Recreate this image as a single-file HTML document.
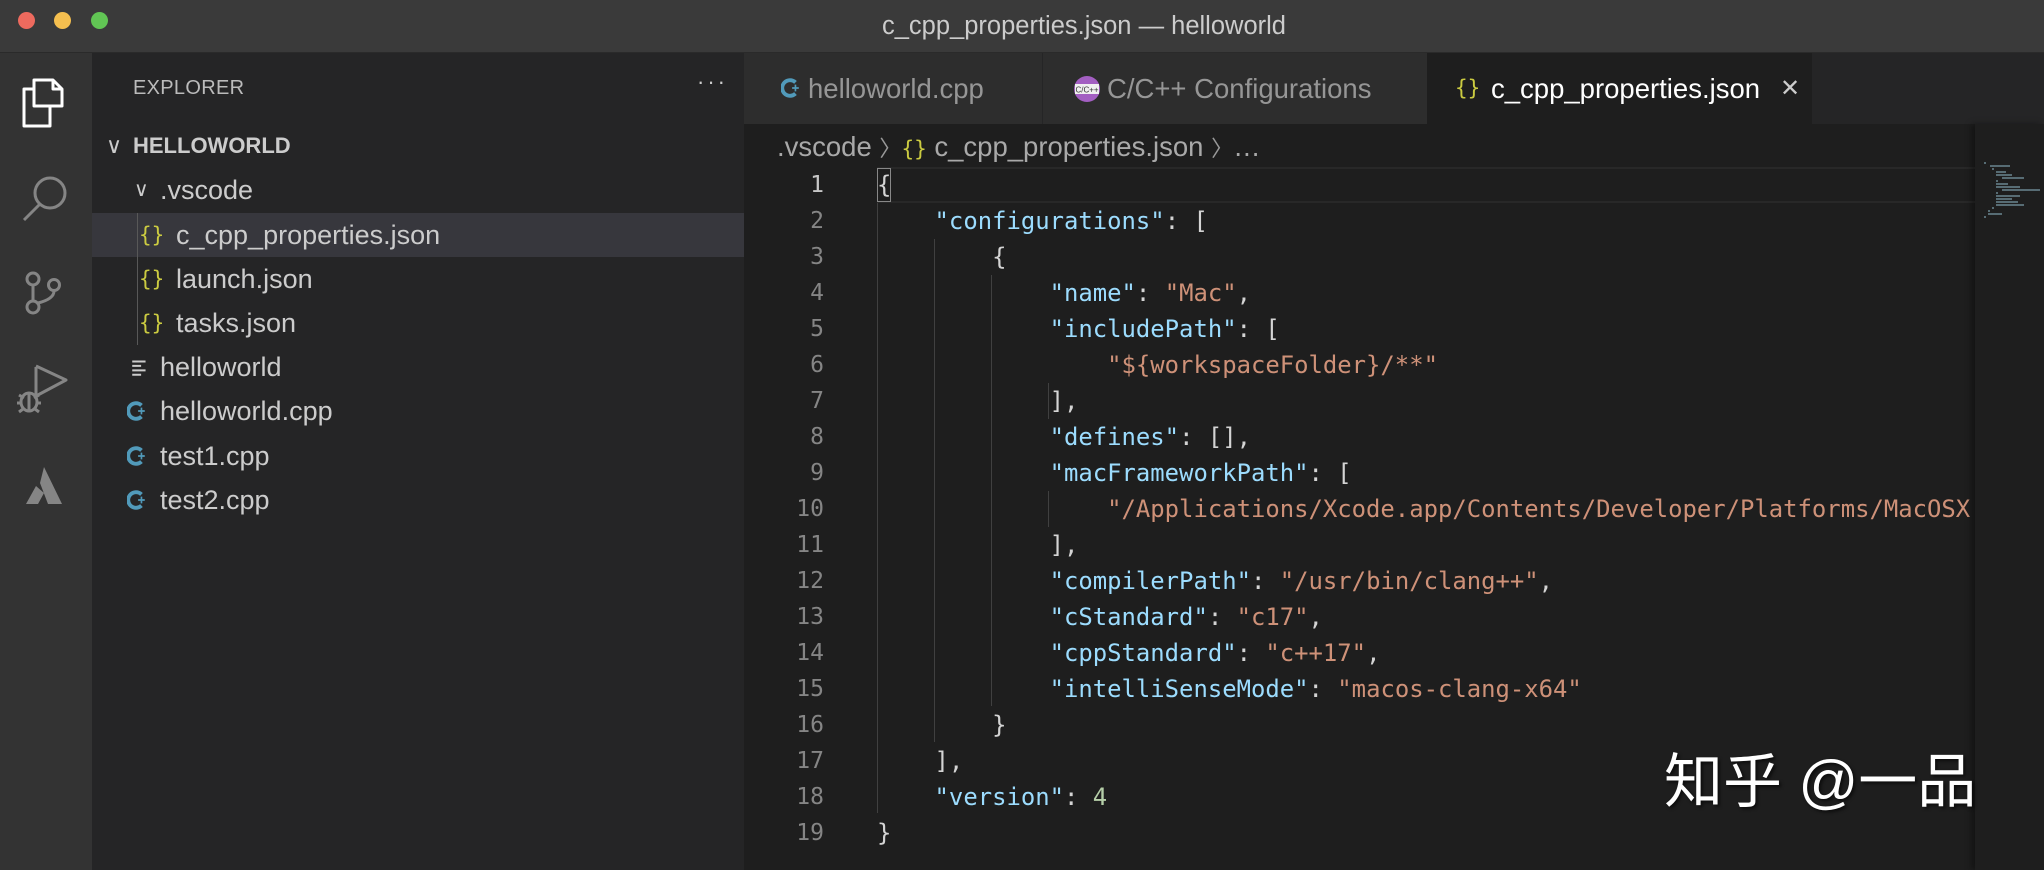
<!DOCTYPE html>
<html><head><meta charset="utf-8">
<style>
*{margin:0;padding:0;box-sizing:border-box}
body{width:2044px;height:870px;background:#1e1e1e;overflow:hidden;position:relative;font-family:"Liberation Sans",sans-serif}
.abs{position:absolute}
#title{left:0;top:0;width:2044px;height:53px;background:#3a3a3a;border-bottom:1px solid #2a2a2a}
#title .t{position:absolute;left:882px;top:0;line-height:52px;color:#cccccc;font-size:25.5px;white-space:nowrap}
.dot{top:12px;width:17px;height:17px;border-radius:50%}
#act{left:0;top:53px;width:92px;height:817px;background:#333333}
#side{left:92px;top:53px;width:652px;height:817px;background:#252526}
.row{position:absolute;left:0;width:652px;height:44px;line-height:44px;color:#cccccc;font-size:27px;white-space:nowrap}
.br{color:#cbcb41;font-family:"DejaVu Sans Mono",monospace;font-size:21px;position:absolute}
.cp{position:absolute;width:20px;height:20px;top:12px}
#tabs{left:744px;top:53px;width:1300px;height:71px;background:#252526}
.tab{position:absolute;top:0;height:71px;line-height:71px;font-size:27.5px;color:#969696;background:#2d2d2d;white-space:nowrap}
.ln{position:absolute;left:744px;width:80px;text-align:right;color:#858585;font-family:"DejaVu Sans Mono",monospace;font-size:23px;height:36px;line-height:36px}
.cl{position:absolute;left:877px;height:36px;line-height:36px;color:#d4d4d4;white-space:pre;font-family:"DejaVu Sans Mono",monospace;font-size:23.9px}
.k{color:#9cdcfe}.s{color:#ce9178}.n{color:#b5cea8}
.g{position:absolute;width:1px;background:#404040}
</style></head><body>
<div id="title" class="abs"><div class="t">c_cpp_properties.json — helloworld</div></div>
<div class="abs dot" style="left:18px;background:#ed6a5e"></div>
<div class="abs dot" style="left:54px;background:#f5bf4f"></div>
<div class="abs dot" style="left:91px;background:#61c554"></div>

<div id="act" class="abs">
<svg width="92" height="817" style="position:absolute;left:0;top:0" fill="none" stroke-width="3" stroke-linejoin="round">
 <g stroke="#ffffff">
  <path d="M34 27 H53 L62 36 V53 H34 Z"/><path d="M53 27 V36 H62"/>
  <path d="M34 36 H24 V73 H50 V53"/>
 </g>
 <g stroke="#858585">
  <circle cx="50" cy="140" r="15"/><path d="M40 151 L24 167"/>
  <circle cx="33" cy="226" r="6"/><circle cx="33" cy="254" r="6"/><circle cx="54" cy="232" r="5.5"/>
  <path d="M33 232 V248 M54 238 Q54 246 38 250"/>
  <path d="M36 314 V343 L66 327 L36 313"/>
  <ellipse cx="29" cy="349" rx="8" ry="9"/><path d="M19 342 L24 345 M39 342 L34 345 M17 350 H21 M37 350 H41 M19 359 L23 356 M39 359 L35 356 M29 341 V358"/>
 </g>
 <path d="M44 414 L62 451 H48 L40 430 Z M36 433 L26 451 H38 L44 440 Z" fill="#858585" stroke="none"/>
</svg>
</div>

<div id="side" class="abs">
 <div class="abs" style="left:41px;top:24px;color:#bbbbbb;font-size:20px;letter-spacing:.3px">EXPLORER</div>
 <div class="abs" style="left:605px;top:16px;color:#cccccc;font-size:22px;letter-spacing:3px">···</div>
 <div class="row" style="top:71px;font-weight:bold;font-size:22px"><span style="position:absolute;left:14px;font-weight:normal">∨</span><span style="position:absolute;left:41px">HELLOWORLD</span></div>
 <div class="row" style="top:115px"><span style="position:absolute;left:42px;font-size:20px">∨</span><span style="position:absolute;left:68px">.vscode</span></div>
 <div class="row" style="top:160px;background:#37373d"><span class="br" style="left:47px">{}</span><span style="position:absolute;left:84px">c_cpp_properties.json</span></div>
 <div class="row" style="top:204px"><span class="br" style="left:47px">{}</span><span style="position:absolute;left:84px">launch.json</span></div>
 <div class="row" style="top:248px"><span class="br" style="left:47px">{}</span><span style="position:absolute;left:84px">tasks.json</span></div>
 <div class="abs" style="left:45px;top:160px;width:1px;height:132px;background:#585858"></div>
 <div class="row" style="top:292px"><svg class="cp" style="left:38px" viewBox="0 0 18 18"><path d="M2 4H14M2 8H10M2 12H14M2 16H10" stroke="#cccccc" stroke-width="1.8"/></svg><span style="position:absolute;left:68px">helloworld</span></div>
 <div class="row" style="top:336px"><svg class="cp" style="left:35px" viewBox="0 0 18 18"><path d="M13 4A7 7 0 1 0 13 14" stroke="#519aba" stroke-width="3.5" fill="none"/><path d="M10 9H16M13 6V12" stroke="#519aba" stroke-width="1.5"/></svg><span style="position:absolute;left:68px">helloworld.cpp</span></div>
 <div class="row" style="top:381px"><svg class="cp" style="left:35px" viewBox="0 0 18 18"><path d="M13 4A7 7 0 1 0 13 14" stroke="#519aba" stroke-width="3.5" fill="none"/><path d="M10 9H16M13 6V12" stroke="#519aba" stroke-width="1.5"/></svg><span style="position:absolute;left:68px">test1.cpp</span></div>
 <div class="row" style="top:425px"><svg class="cp" style="left:35px" viewBox="0 0 18 18"><path d="M13 4A7 7 0 1 0 13 14" stroke="#519aba" stroke-width="3.5" fill="none"/><path d="M10 9H16M13 6V12" stroke="#519aba" stroke-width="1.5"/></svg><span style="position:absolute;left:68px">test2.cpp</span></div>
</div>

<div id="tabs" class="abs">
 <div class="tab" style="left:0;width:299px;border-right:1px solid #252526"><svg class="cp" style="left:37px;top:25px" viewBox="0 0 18 18"><path d="M13 4A7 7 0 1 0 13 14" stroke="#519aba" stroke-width="3.5" fill="none"/><path d="M10 9H16M13 6V12" stroke="#519aba" stroke-width="1.5"/></svg><span style="position:absolute;left:64px">helloworld.cpp</span></div>
 <div class="tab" style="left:299px;width:384px"><svg style="position:absolute;left:30px;top:22px" width="28" height="28" viewBox="0 0 28 28"><circle cx="14" cy="14" r="13" fill="#a35fc2"/><rect x="2" y="9" width="24" height="10" fill="#f0f0f0"/><text x="14" y="17.5" font-size="8" text-anchor="middle" fill="#333" font-family="Liberation Sans">C/C++</text></svg><span style="position:absolute;left:64px">C/C++ Configurations</span></div>
 <div class="tab" style="left:683px;width:385px;background:#1e1e1e;color:#ffffff"><span class="br" style="left:28px;font-size:21px">{}</span><span style="position:absolute;left:64px">c_cpp_properties.json</span><span style="position:absolute;left:353px;font-size:24px;color:#cccccc">✕</span></div>
</div>

<div class="abs" style="left:777px;top:130px;color:#a9a9a9;font-size:27.5px;white-space:nowrap;line-height:34px">.vscode <span style="color:#999;font-size:22px">〉</span><span class="br" style="position:static;font-size:21px">{}</span> c_cpp_properties.json <span style="color:#999;font-size:22px">〉</span>…</div>

<div class="abs" style="left:877px;top:167px;width:1098px;height:36px;border-top:2px solid #282828;border-bottom:2px solid #282828"></div>
<div class="abs" style="left:877px;top:168px;width:14px;height:34px;border:1px solid #888"></div>

<div class="g" style="left:877px;top:203px;height:610px"></div>
<div class="g" style="left:934px;top:239px;height:503px"></div>
<div class="g" style="left:991px;top:275px;height:431px"></div>
<div class="g" style="left:1048px;top:383px;height:36px"></div>
<div class="g" style="left:1048px;top:491px;height:36px"></div>

<div class="ln" style="top:167px;color:#c6c6c6">1</div>
<div class="ln" style="top:203px">2</div>
<div class="ln" style="top:239px">3</div>
<div class="ln" style="top:275px">4</div>
<div class="ln" style="top:311px">5</div>
<div class="ln" style="top:347px">6</div>
<div class="ln" style="top:383px">7</div>
<div class="ln" style="top:419px">8</div>
<div class="ln" style="top:455px">9</div>
<div class="ln" style="top:491px">10</div>
<div class="ln" style="top:527px">11</div>
<div class="ln" style="top:563px">12</div>
<div class="ln" style="top:599px">13</div>
<div class="ln" style="top:635px">14</div>
<div class="ln" style="top:671px">15</div>
<div class="ln" style="top:707px">16</div>
<div class="ln" style="top:743px">17</div>
<div class="ln" style="top:779px">18</div>
<div class="ln" style="top:815px">19</div>

<div class="cl" style="top:167px">{</div>
<div class="cl" style="top:203px">    <span class="k">"configurations"</span>: [</div>
<div class="cl" style="top:239px">        {</div>
<div class="cl" style="top:275px">            <span class="k">"name"</span>: <span class="s">"Mac"</span>,</div>
<div class="cl" style="top:311px">            <span class="k">"includePath"</span>: [</div>
<div class="cl" style="top:347px">                <span class="s">"${workspaceFolder}/**"</span></div>
<div class="cl" style="top:383px">            ],</div>
<div class="cl" style="top:419px">            <span class="k">"defines"</span>: [],</div>
<div class="cl" style="top:455px">            <span class="k">"macFrameworkPath"</span>: [</div>
<div class="cl" style="top:491px;width:1098px;overflow:hidden">                <span class="s">"/Applications/Xcode.app/Contents/Developer/Platforms/MacOSX</span></div>
<div class="cl" style="top:527px">            ],</div>
<div class="cl" style="top:563px">            <span class="k">"compilerPath"</span>: <span class="s">"/usr/bin/clang++"</span>,</div>
<div class="cl" style="top:599px">            <span class="k">"cStandard"</span>: <span class="s">"c17"</span>,</div>
<div class="cl" style="top:635px">            <span class="k">"cppStandard"</span>: <span class="s">"c++17"</span>,</div>
<div class="cl" style="top:671px">            <span class="k">"intelliSenseMode"</span>: <span class="s">"macos-clang-x64"</span></div>
<div class="cl" style="top:707px">        }</div>
<div class="cl" style="top:743px">    ],</div>
<div class="cl" style="top:779px">    <span class="k">"version"</span>: <span class="n">4</span></div>
<div class="cl" style="top:815px">}</div>

<div class="abs" style="left:1975px;top:124px;width:69px;height:746px;background:#1e1e1e;box-shadow:-4px 0 6px rgba(0,0,0,.35)"></div>
<svg class="abs" style="left:1980px;top:160px" width="64" height="60">
 <g stroke="#7a9aa8" stroke-width="1.2">
  <path d="M4 3H6M10 6H30M12 9H14M16 12H26M16 15H32M22 18H44M16 21H18M16 24H28M16 27H40M22 30H60M16 33H18M16 36H40M16 39H32M16 42H38M16 45H44M12 48H14M8 51H10M8 54H22M4 57H6"/>
 </g>
</svg>

<div class="abs" style="left:1664px;top:746px;color:#ffffff;font-size:59px;font-family:'Liberation Sans','Noto Sans CJK SC',sans-serif;white-space:nowrap;text-shadow:2px 2px 3px rgba(0,0,0,.6);line-height:72px">知乎 @一品</div>
</body></html>
